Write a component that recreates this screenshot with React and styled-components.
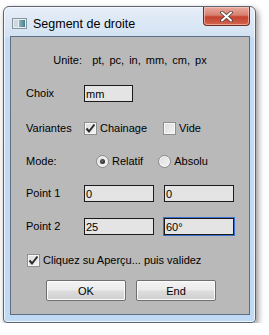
import React, { useState } from 'react'
import styled, { createGlobalStyle } from 'styled-components'

const GlobalStyle = createGlobalStyle`
    html, body {
        margin: 0;
        padding: 0;
        background: #ffffff;
    }
    body {
        font-family: "Liberation Sans", Arial, sans-serif;
    }
`

const Window = styled.div`
    margin: 6px 0 0 3px;
    width: 253px;
    height: 317px;
    box-sizing: border-box;
    display: flex;
    flex-direction: column;
    border: 1px solid #5b6470;
    border-radius: 6px 6px 4px 4px;
    background: linear-gradient(to bottom, #e6eef8 0%, #d2e2f3 30px, #c4dbf4 31px, #c0daf6 100%);
    box-shadow: 2px 3px 6px rgba(0, 0, 0, 0.45), inset 0 0 0 1px rgba(255, 255, 255, 0.7);
    padding: 0 5px 7px 6px;
`

const TitleBar = styled.div`
    height: 29px;
    display: flex;
    align-items: flex-start;
`

const TitleIcon = styled.svg`
    margin: 11px 0 0 2px;
    flex: none;
`

const Title = styled.span`
    margin: 10px 0 0 6px;
    font-size: 12.5px;
    color: #000;
    flex: 1;
`

const CloseButton = styled.div`
    width: 45px;
    height: 18px;
    margin: 0 0 0 0;
    border: 1px solid #6d2b25;
    border-top: none;
    border-radius: 0 0 4px 4px;
    background: linear-gradient(to bottom, #e8a99c 0%, #d98170 45%, #c5412f 55%, #d2664f 100%);
    box-shadow: inset 0 0 0 1px rgba(255, 210, 200, 0.6);
    display: flex;
    align-items: center;
    justify-content: center;
`

const Client = styled.div`
    flex: 1;
    border: 1px solid #5f6d80;
    background: #b9b9b9;
    display: flex;
    flex-direction: column;
    padding: 0 0 0 15px;
`

const Row = styled.div`
    height: 20px;
    margin-top: ${p => p.$top}px;
    display: flex;
    align-items: center;
    font-size: 11px;
    color: #000;
`

const Units = styled(Row)`
    justify-content: center;
    padding-right: 15px;
    word-spacing: 2px;
`

const Label = styled.span`
    width: 58px;
    flex: none;
`

const TextBox = styled.div`
    box-sizing: border-box;
    width: ${p => p.$width}px;
    height: 17px;
    margin-right: ${p => p.$gap || 0}px;
    background: #e4e4e4;
    border: 1px solid #1b1b1b;
    box-shadow: ${p => (p.$focused ? '0 0 0 1px #3b6fd0' : 'none')};
    font-size: 11px;
    padding: 1px 0 0 1px;
    line-height: 14px;
`

const Choice = styled.label`
    display: flex;
    align-items: center;
    margin-left: ${p => p.$left || 0}px;
`

const Box = styled.span`
    box-sizing: border-box;
    width: 13px;
    height: 13px;
    border: 1px solid #8f8f8f;
    background: linear-gradient(135deg, #dcdcdc 0%, #f4f4f4 100%);
    box-shadow: inset 0 0 0 1px #f6f6f6;
    margin-right: 3px;
    display: flex;
    align-items: center;
    justify-content: center;
`

const Round = styled(Box)`
    border-radius: 50%;
    border-color: #8a8a8a;
`

const Dot = styled.span`
    width: 5px;
    height: 5px;
    border-radius: 50%;
    background: radial-gradient(circle at 40% 40%, #6a6a6a, #111);
`

const Buttons = styled(Row)`
    padding-left: 20px;
    height: 21px;
    gap: 10px;
`

const Button = styled.button`
    box-sizing: border-box;
    width: 80px;
    height: 21px;
    border: 1px solid #6f6f6f;
    border-radius: 2px;
    background: linear-gradient(to bottom, #f3f3f3 0%, #ebebeb 48%, #dddddd 52%, #cfcfcf 100%);
    box-shadow: inset 0 0 0 1px #fbfbfb;
    font-family: "Liberation Sans", Arial, sans-serif;
    font-size: 11px;
    color: #000;
    padding: 0;
`

const Check = () => (
    <svg width="11" height="11" viewBox="0 0 11 11">
        <path d="M1.5 5.5 L4 8.5 L9.5 1.5" fill="none" stroke="#2a2a2a" strokeWidth="2" />
    </svg>
)

const CheckBox = ({ checked, children, left }) => (
    <Choice $left={left}>
        <Box>{checked && <Check />}</Box>
        {children}
    </Choice>
)

const Radio = ({ checked, children, left }) => (
    <Choice $left={left}>
        <Round>{checked && <Dot />}</Round>
        {children}
    </Choice>
)

const App = () => {
    const [mode] = useState('relatif')

    return (
        <>
            <GlobalStyle />
            <Window>
                <TitleBar>
                    <TitleIcon width="15" height="11" viewBox="0 0 15 11">
                        <defs>
                            <linearGradient id="ic" x1="0" y1="0" x2="1" y2="0">
                                <stop offset="0" stopColor="#8fb2c4" />
                                <stop offset="1" stopColor="#3f7f8c" />
                            </linearGradient>
                        </defs>
                        <rect x="0.5" y="0.5" width="14" height="10" fill="#e8eef2" stroke="#8a949c" />
                        <rect x="2" y="2" width="4" height="7" fill="#cfd8de" />
                        <rect x="7" y="2" width="6" height="7" fill="url(#ic)" />
                    </TitleIcon>
                    <Title>Segment de droite</Title>
                    <CloseButton>
                        <svg width="13" height="11" viewBox="0 0 13 11">
                            <path d="M2 1.5 L11 9.5 M11 1.5 L2 9.5" stroke="#4a3c3a" strokeWidth="3.6" strokeLinecap="round" />
                            <path d="M2 1.5 L11 9.5 M11 1.5 L2 9.5" stroke="#ffffff" strokeWidth="2" strokeLinecap="round" />
                        </svg>
                    </CloseButton>
                </TitleBar>
                <Client>
                    <Units $top={13}>Unite:&nbsp; pt, pc, in, mm, cm, px</Units>
                    <Row $top={13}>
                        <Label>Choix</Label>
                        <TextBox $width={49}>mm</TextBox>
                    </Row>
                    <Row $top={15}>
                        <Label>Variantes</Label>
                        <CheckBox checked>Chainage</CheckBox>
                        <CheckBox left={16}>Vide</CheckBox>
                    </Row>
                    <Row $top={13}>
                        <Label>Mode:</Label>
                        <Radio checked={mode === 'relatif'} left={12}>Relatif</Radio>
                        <Radio checked={mode === 'absolu'} left={15}>Absolu</Radio>
                    </Row>
                    <Row $top={12}>
                        <Label>Point 1</Label>
                        <TextBox $width={70} $gap={10}>0</TextBox>
                        <TextBox $width={70}>0</TextBox>
                    </Row>
                    <Row $top={13}>
                        <Label>Point 2</Label>
                        <TextBox $width={70} $gap={10}>25</TextBox>
                        <TextBox $width={70} $focused>60°</TextBox>
                    </Row>
                    <Row $top={14}>
                        <CheckBox checked left={1}>Cliquez su Aperçu... puis validez</CheckBox>
                    </Row>
                    <Buttons $top={10}>
                        <Button>OK</Button>
                        <Button>End</Button>
                    </Buttons>
                </Client>
            </Window>
        </>
    )
}

export default App
